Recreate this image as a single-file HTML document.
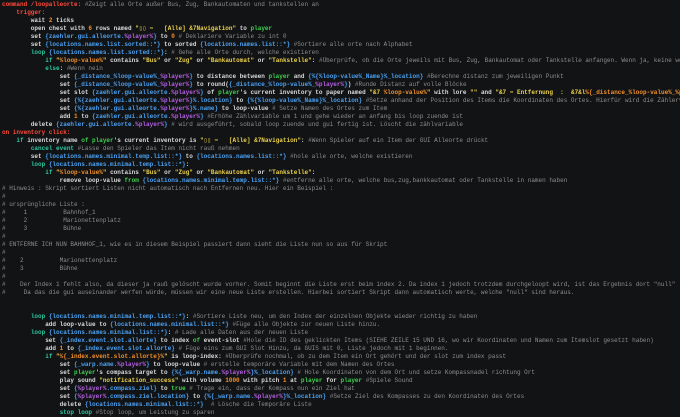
<!DOCTYPE html>
<html><head><meta charset="utf-8"><style>
html,body{margin:0;padding:0;background:#121315;width:680px;height:417px;overflow:hidden}
pre{margin:0;padding:1px 0 0 2px;width:678px;height:416px;overflow:hidden;font-family:"Liberation Mono","DejaVu Sans Mono",monospace;font-size:6px;line-height:8px;color:#dadada;font-weight:bold;white-space:pre}
.r{color:#ff4a3a}.o{color:#f5902a}.y{color:#ecd24a}.g{color:#3fd04e}.t{color:#2cc6a2}.b{color:#4aa0f2}.p{color:#b45ee2}.c{color:#8d8d8d;font-weight:normal}
</style></head><body><pre><span class="r">command /loopalleorte:</span> <span class="c">#Zeigt alle Orte außer Bus, Zug, Bankautomaten und tankstellen an</span>
    <span class="r">trigger:</span>
        wait <span class="o">2</span> ticks
        open chest with <span class="o">6</span> rows named <span class="y">"▯▯ ➡   [Alle] &amp;7Navigation"</span> to <span class="g">player</span>
        set <span class="b">{zaehler.gui.alleorte.<span class="p">%player%</span>}</span> to <span class="o">0</span> <span class="c"># Deklariere Variable zu int 0</span>
        set <span class="b">{locations.names.list.sorted::*}</span> to sorted <span class="b">{locations.names.list::*}</span> <span class="c">#Sortiere alle orte nach Alphabet</span>
        <span class="t">loop</span> <span class="b">{locations.names.list.sorted::*}</span>: <span class="c"># Gehe alle Orte durch, welche existieren</span>
            <span class="t">if</span> <span class="y">"<span class="o">%loop-value%</span>"</span> contains <span class="y">"Bus"</span> or <span class="y">"Zug"</span> or <span class="y">"Bankautomat"</span> or <span class="y">"Tankstelle"</span>: <span class="c">#Überprüfe, ob die Orte jeweils mit Bus, Zug, Bankautomat oder Tankstelle anfangen. Wenn ja, keine weiteren</span>
            <span class="t">else</span>: <span class="c">#Wenn nein</span>
                set <span class="b">{_distance_%loop-value%_<span class="p">%player%</span>}</span> to distance between <span class="g">player</span> and <span class="b">{%{%loop-value%_Name}%_location}</span> <span class="c">#Berechne distanz zum jeweiligen Punkt</span>
                set <span class="b">{_distance_%loop-value%_<span class="p">%player%</span>}</span> to round(<span class="b">{_distance_%loop-value%_<span class="p">%player%</span>}</span>) <span class="c">#Runde Distanz auf volle Blöcke</span>
                set slot <span class="b">{zaehler.gui.alleorte.<span class="p">%player%</span>}</span> of <span class="g">player</span>'s current inventory to paper named <span class="y">"&amp;7 <span class="o">%loop-value%</span>"</span> with lore <span class="y">""</span> and <span class="y">"&amp;7 ➡ Entfernung  :  &amp;7&amp;l<span class="o">%{_distance_%loop-value%_%player%}%</span>"</span>
                set <span class="b">{%{zaehler.gui.alleorte.<span class="p">%player%</span>}%.location}</span> to <span class="b">{%{%loop-value%_Name}%_location}</span> <span class="c">#Setze anhand der Position des Items die Koordinaten des Ortes. Hierfür wird die Zählervariable</span>
                set <span class="b">{%{zaehler.gui.alleorte.<span class="p">%player%</span>}%.name}</span> to loop-value <span class="c"># Setze Namen des Ortes zum Item</span>
                add <span class="o">1</span> to <span class="b">{zaehler.gui.alleorte.<span class="p">%player%</span>}</span> <span class="c">#Erhöhe Zählvariable um 1 und gehe wieder an anfang bis loop zuende ist</span>
        delete <span class="b">{zaehler.gui.alleorte.<span class="p">%player%</span>}</span> <span class="c"># wird ausgeführt, sobald loop zuende und gui fertig ist. Löscht die zählvariable</span>
<span class="r">on inventory click:</span>
    <span class="t">if</span> inventory name <span class="g">of</span> <span class="g">player</span>'s current inventory is <span class="y">"▯▯ ➡   [Alle] &amp;7Navigation"</span>: <span class="c">#Wenn Spieler auf ein Item der GUI Alleorte drückt</span>
        <span class="t">cancel event</span> <span class="c">#Lasse den Spieler das Item nicht rauß nehmen</span>
        set <span class="b">{locations.names.minimal.temp.list::*}</span> to <span class="b">{locations.names.list::*}</span> <span class="c">#hole alle orte, welche existieren</span>
        <span class="t">loop</span> <span class="b">{locations.names.minimal.temp.list::*}</span>:
            <span class="t">if</span> <span class="y">"<span class="o">%loop-value%</span>"</span> contains <span class="y">"Bus"</span> or <span class="y">"Zug"</span> or <span class="y">"Bankautomat"</span> or <span class="y">"Tankstelle"</span>:
                remove loop-value <span class="g">from</span> <span class="b">{locations.names.minimal.temp.list::*}</span> <span class="c">#entferne alle orte, welche bus,zug,bankkautomat oder Tankstelle in namen haben</span>
<span class="c"># Hinweis : Skript sortiert Listen nicht automatisch nach Entfernen neu. Hier ein Beispiel :
#
# ursprüngliche Liste :
#     1          Bahnhof_1
#     2          Marionettenplatz
#     3          Bühne
#
# ENTFERNE ICH NUN BAHNHOF_1, wie es in diesem Beispiel passiert dann sieht die Liste nun so aus für Skript
#
#    2          Marionettenplatz
#    3          Bühne
#
#    Der Index 1 fehlt also, da dieser ja rauß gelöscht wurde vorher. Somit beginnt die Liste erst beim index 2. Da index 1 jedoch trotzdem durchgeloopt wird, ist das Ergebnis dort "null"
#     Da das die gui auseinander werfen würde, müssen wir eine neue Liste erstellen. Hierbei sortiert Skript dann automatisch werte, welche "null" sind heraus.</span>


        <span class="t">loop</span> <span class="b">{locations.names.minimal.temp.list::*}</span>: <span class="c">#Sortiere Liste neu, um den Index der einzelnen Objekte wieder richtig zu haben</span>
            add loop-value to <span class="b">{locations.names.minimal.list::*}</span> <span class="c">#Füge alle Objekte zur neuen Liste hinzu.</span>
        <span class="t">loop</span> <span class="b">{locations.names.minimal.list::*}</span>: <span class="c"># Lade alle Daten aus der neuen Liste</span>
            set <span class="b">{_index.event.slot.allorte}</span> to index <span class="g">of</span> event-slot <span class="c">#Hole die ID des geklickten Items (SIEHE ZEILE 15 UND 16, wo wir Koordinaten und Namen zum Itemslot gesetzt haben)</span>
            add <span class="o">1</span> to <span class="b">{_index.event.slot.allorte}</span> <span class="c"># Füge eins zum GUI Slot Hinzu, da GUIS mit 0, Liste jedoch mit 1 beginnen.</span>
            <span class="t">if</span> <span class="y">"<span class="o">%{_index.event.slot.allorte}%</span>"</span> is loop-index: <span class="c">#Überprüfe nochmal, ob zu dem Item ein Ort gehört und der slot zum index passt</span>
                set <span class="b">{_warp.name.<span class="p">%player%</span>}</span> to loop-value <span class="c"># erstelle temporäre Variable mit dem Namen des Ortes</span>
                set <span class="g">player</span>'s compass target to <span class="b">{%{_warp.name.<span class="p">%player%</span>}%_location}</span> <span class="c"># Hole Koordinaten von dem Ort und setze Kompassnadel richtung Ort</span>
                play sound <span class="y">"notification_success"</span> with volume <span class="o">1000</span> with pitch <span class="o">1</span> at <span class="g">player</span> for <span class="g">player</span> <span class="c">#Spiele Sound</span>
                set <span class="b">{<span class="p">%player%</span>.compass.ziel}</span> to <span class="g">true</span> <span class="c"># Trage ein, dass der Kompass nun ein Ziel hat</span>
                set <span class="b">{<span class="p">%player%</span>.compass.ziel.location}</span> to <span class="b">{%{_warp.name.<span class="p">%player%</span>}%_location}</span> <span class="c">#Setze Ziel des Kompasses zu den Koordinaten des Ortes</span>
                delete <span class="b">{locations.names.minimal.list::*}</span>  <span class="c"># Lösche die Temporäre Liste</span>
                <span class="t">stop loop</span> <span class="c">#Stop loop, um Leistung zu sparen</span>
<span class="r">on inventory click:</span></pre></body></html>
